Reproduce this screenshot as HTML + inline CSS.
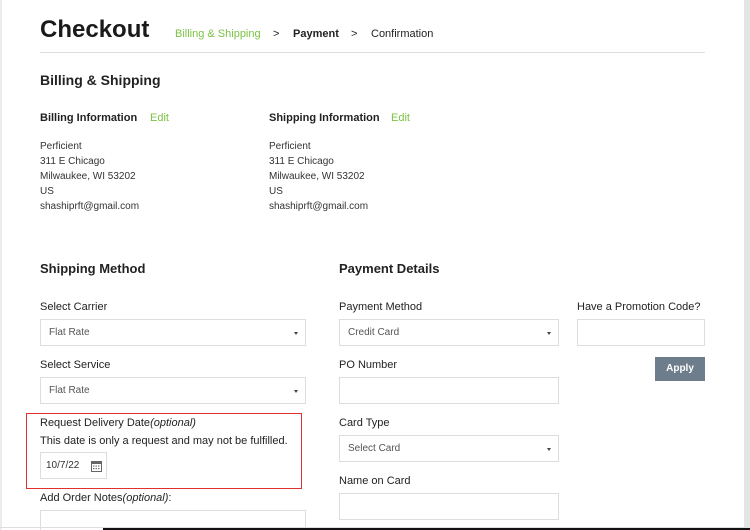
<!DOCTYPE html>
<html><head><meta charset="utf-8"><style>
*{margin:0;padding:0;box-sizing:border-box}
html,body{width:750px;height:530px;overflow:hidden;background:#fff}
body{position:relative;font-family:"Liberation Sans",sans-serif;color:#222}
.a{position:absolute;white-space:nowrap}
.t{font-size:10px;color:#333}
.lbl{font-size:11px;color:#222}
.box{position:absolute;border:1px solid #ddd;background:#fff;height:27px}
.sel{font-size:10px;color:#555;padding-left:8px;line-height:26px}
.sel:after{content:"";position:absolute;right:7px;top:12px;border:2px solid transparent;border-top:3px solid #444;border-bottom:0}
.h{font-weight:bold}
.g{color:#7cc243}
</style></head><body>

<div class="a h" style="left:40px;top:16px;font-size:24px;color:#1a1a1a">Checkout</div>
<div class="a g" style="left:175px;top:28px;font-size:11px">Billing &amp; Shipping</div>
<div class="a" style="left:273px;top:28px;font-size:11px">&gt;</div>
<div class="a h" style="left:293px;top:28px;font-size:11px">Payment</div>
<div class="a" style="left:351px;top:28px;font-size:11px">&gt;</div>
<div class="a" style="left:371px;top:28px;font-size:11px">Confirmation</div>
<div class="a" style="left:40px;top:52px;width:665px;height:1px;background:#ddd"></div>

<div class="a h" style="left:40px;top:72px;font-size:14px">Billing &amp; Shipping</div>
<div class="a h" style="left:40px;top:112px;font-size:11px">Billing Information</div>
<div class="a g" style="left:150px;top:112px;font-size:11px">Edit</div>
<div class="a h" style="left:269px;top:112px;font-size:11px">Shipping Information</div>
<div class="a g" style="left:391px;top:112px;font-size:11px">Edit</div>
<div class="a t" style="left:40px;top:139px;line-height:15px">Perficient<br>311 E Chicago<br>Milwaukee, WI 53202<br>US<br>shashiprft@gmail.com</div>
<div class="a t" style="left:269px;top:139px;line-height:15px">Perficient<br>311 E Chicago<br>Milwaukee, WI 53202<br>US<br>shashiprft@gmail.com</div>

<div class="a h" style="left:40px;top:261px;font-size:13px">Shipping Method</div>
<div class="a h" style="left:339px;top:261px;font-size:13px">Payment Details</div>

<div class="a lbl" style="left:40px;top:301px">Select Carrier</div>
<div class="box sel" style="left:40px;top:319px;width:266px">Flat Rate</div>
<div class="a lbl" style="left:40px;top:359px">Select Service</div>
<div class="box sel" style="left:40px;top:377px;width:266px">Flat Rate</div>

<div class="a" style="left:26px;top:413px;width:276px;height:76px;border:1px solid #e03030"></div>
<div class="a lbl" style="left:40px;top:417px">Request Delivery Date<i>(optional)</i></div>
<div class="a lbl" style="left:40px;top:435px">This date is only a request and may not be fulfilled.</div>
<div class="box" style="left:40px;top:452px;width:67px;font-size:10px;line-height:26px;padding-left:5px;color:#333">10/7/22
<svg style="position:absolute;left:50px;top:7px" width="11" height="12" viewBox="0 0 11 12"><rect x="0.5" y="1.5" width="10" height="10" fill="#fff" stroke="#666"/><rect x="0.5" y="1.5" width="10" height="2.5" fill="#666"/><g fill="#777"><rect x="2" y="5.5" width="1.5" height="1.2"/><rect x="4.5" y="5.5" width="1.5" height="1.2"/><rect x="7" y="5.5" width="1.5" height="1.2"/><rect x="2" y="8" width="1.5" height="1.2"/><rect x="4.5" y="8" width="1.5" height="1.2"/><rect x="7" y="8" width="1.5" height="1.2"/></g></svg></div>
<div class="a lbl" style="left:40px;top:492px">Add Order Notes<i>(optional)</i>:</div>
<div class="box" style="left:40px;top:510px;width:266px"></div>

<div class="a lbl" style="left:339px;top:301px">Payment Method</div>
<div class="box sel" style="left:339px;top:319px;width:220px">Credit Card</div>
<div class="a lbl" style="left:577px;top:301px">Have a Promotion Code?</div>
<div class="box" style="left:577px;top:319px;width:128px"></div>
<div class="a h" style="left:655px;top:357px;width:50px;height:24px;background:#6d7d8c;color:#fff;font-size:10px;text-align:center;line-height:24px">Apply</div>
<div class="a lbl" style="left:339px;top:359px">PO Number</div>
<div class="box" style="left:339px;top:377px;width:220px"></div>
<div class="a lbl" style="left:339px;top:417px">Card Type</div>
<div class="box sel" style="left:339px;top:435px;width:220px">Select Card</div>
<div class="a lbl" style="left:339px;top:475px">Name on Card</div>
<div class="box" style="left:339px;top:493px;width:220px"></div>

<div class="a" style="left:0;top:0;width:2px;height:530px;background:#ececec"></div>
<div class="a" style="left:744px;top:0;width:6px;height:530px;background:#e4e4e4"></div>
<div class="a" style="left:0;top:527px;width:750px;height:1px;background:#ddd"></div>
<div class="a" style="left:103px;top:528px;width:647px;height:2px;background:#111"></div>
</body></html>
